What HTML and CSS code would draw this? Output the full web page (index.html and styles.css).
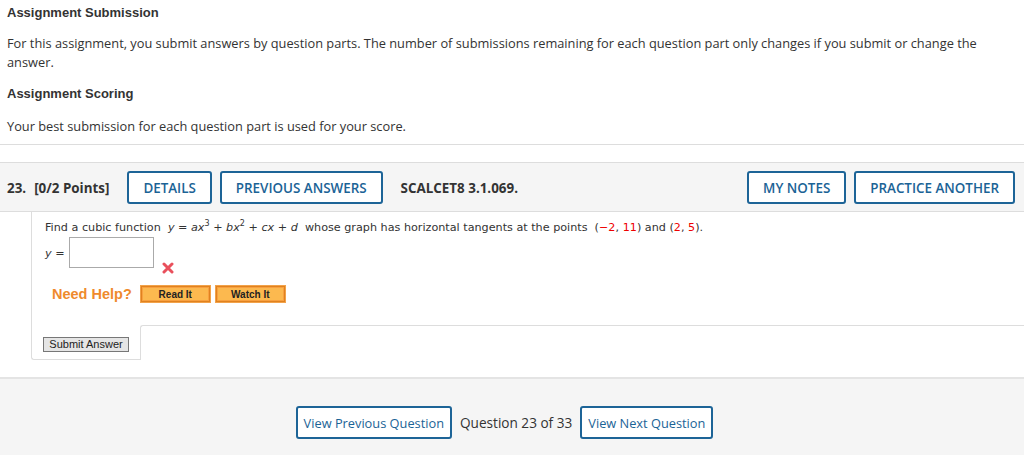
FILE: index.html
```html
<!DOCTYPE html>
<html>
<head>
<meta charset="utf-8">
<link rel="stylesheet" href="styles.css">
</head>
<body>
<div class="intro">
  <h3 class="title">Assignment Submission</h3>
  <p class="para">For this assignment, you submit answers by question parts. The number of submissions remaining for each question part only changes if you submit or change the answer.</p>
  <h3 class="title t2">Assignment Scoring</h3>
  <p class="para p2">Your best submission for each question part is used for your score.</p>
</div>

<div class="qhead">
  <span class="qnum">23.</span>
  <span class="qpts">[0/2 Points]</span>
  <span class="btn">DETAILS</span>
  <span class="btn">PREVIOUS ANSWERS</span>
  <span class="qref">SCALCET8 3.1.069.</span>
  <span class="spacer"></span>
  <span class="btn">MY NOTES</span>
  <span class="btn">PRACTICE ANOTHER</span>
</div>

<div class="qarea">
  <div class="qmain">
    <div class="qtext">Find a cubic function&nbsp; <i>y</i> = <i>ax</i><sup>3</sup> + <i>bx</i><sup>2</sup> + <i>cx</i> + <i>d</i>&nbsp; whose graph has horizontal tangents at the points&nbsp; (<span class="red">−2</span>, <span class="red">11</span>) and (<span class="red">2</span>, <span class="red">5</span>).</div>
    <div class="ansrow">
      <span class="yeq"><i>y</i> =</span>
      <span class="input"></span>
      <svg class="xmark" width="12" height="12" viewBox="0 0 12 12"><path d="M2 2 L10 10 M10 2 L2 10" stroke="#e9505c" stroke-width="3" stroke-linecap="round"/></svg>
    </div>
    <div class="helprow">
      <span class="needhelp">Need Help?</span>
      <span class="hbtn">Read It</span>
      <span class="hbtn">Watch It</span>
    </div>
  </div>
  <div class="subrow">
    <div class="subbox"><span class="subbtn">Submit Answer</span></div>
    <div class="subfill"></div>
  </div>
</div>

<div class="footer">
  <span class="fbtn">View Previous Question</span>
  <span class="fcount">Question 23 of 33</span>
  <span class="fbtn">View Next Question</span>
</div>
</body>
</html>
```
FILE: styles.css
```css
html, body { margin: 0; padding: 0; background: #fff; }
body { font-family: "Open Sans", "Liberation Sans", sans-serif; color: #333; }

.intro { padding: 4px 7px 8px; border-bottom: 1px solid #ddd; }
.title { font-family: "Liberation Sans", Arial, sans-serif; font-weight: bold; font-size: 13px; line-height: 18px; margin: 0; color: #333; }
.t2 { margin-top: 13px; }
.para { font-size: 12.8px; line-height: 19px; margin: 12px 0 0; color: #333; }
.p2 { margin-top: 14px; }

.qhead { margin-top: 17px; border-top: 1px solid #ddd; border-bottom: 1px solid #ddd; background: #f5f5f5; display: flex; align-items: center; padding: 8px 9px 7px 7px; gap: 8px; font-size: 13.4px; font-weight: 700; color: #333; }
.qpts { margin-left: 0; margin-right: 10px; }
.qref { margin-left: 10px; }
.spacer { flex: 1; }
.btn { display: inline-flex; align-items: center; height: 29px; padding: 0 14px; border: 2px solid #1d6497; border-radius: 3px; background: #fff; color: #1b6396; font-weight: 600; font-size: 13.4px; }

.qarea { margin-left: 31px; }
.qmain { border-left: 1px solid #ddd; padding: 8px 0 22px 13px; font-family: "DejaVu Sans", Verdana, sans-serif; font-size: 11.2px; color: #333; }
.qtext { line-height: 16px; }
.qtext sup { font-size: 8px; line-height: 0; vertical-align: 5px; }
.red { color: #e00; }
.ansrow { display: flex; align-items: flex-start; margin-top: 1px; height: 35px; }
.yeq { margin-top: 10px; margin-right: 4px; }
.input { width: 83px; height: 29px; border: 1px solid #aaa; background: #fff; }
.xmark { margin: 25px 0 0 8px; }
.helprow { display: flex; align-items: center; margin-top: 13px; margin-left: 7px; gap: 4px; }
.needhelp { font-family: "Liberation Sans", Arial, sans-serif; font-weight: bold; font-size: 14.5px; color: #ef8a2c; margin-right: 4px; }
.hbtn { width: 67px; height: 14px; display: inline-flex; align-items: center; justify-content: center; background: #fcb94f; border: 1px solid #e0821f; box-shadow: inset 0 0 0 1px #f8a040; outline: 1px solid #f2a24a; font-family: "Liberation Sans", Arial, sans-serif; font-weight: bold; font-size: 10px; color: #222; margin: 1px; }

.subrow { display: flex; }
.subbox { width: 97px; display: flex; align-items: flex-start; border-left: 1px solid #ddd; border-bottom: 1px solid #ddd; border-bottom-left-radius: 3px; padding: 12px 0 7px 11px; }
.subbtn { display: inline-flex; align-items: center; justify-content: center; width: 84px; height: 13px; border: 1px solid #777; background: #e5e5e5; font-family: "Liberation Sans", Arial, sans-serif; font-size: 11px; line-height: 13px; color: #222; }
.subfill { flex: 1; border-top: 1px solid #ddd; border-left: 1px solid #ddd; border-top-left-radius: 3px; }

.footer { margin-top: 17px; border-top: 2px solid #e4e4e4; background: #f5f5f5; height: 100px; display: flex; justify-content: center; align-items: flex-start; padding: 27px 15px 0 0; gap: 8px; }
.fbtn { display: inline-flex; align-items: center; height: 29px; padding: 0 6px; border: 2px solid #1d6497; border-radius: 3px; background: #fff; color: #1b6396; font-size: 12.8px; }
.fcount { line-height: 33px; font-size: 13.6px; color: #333; }
```
